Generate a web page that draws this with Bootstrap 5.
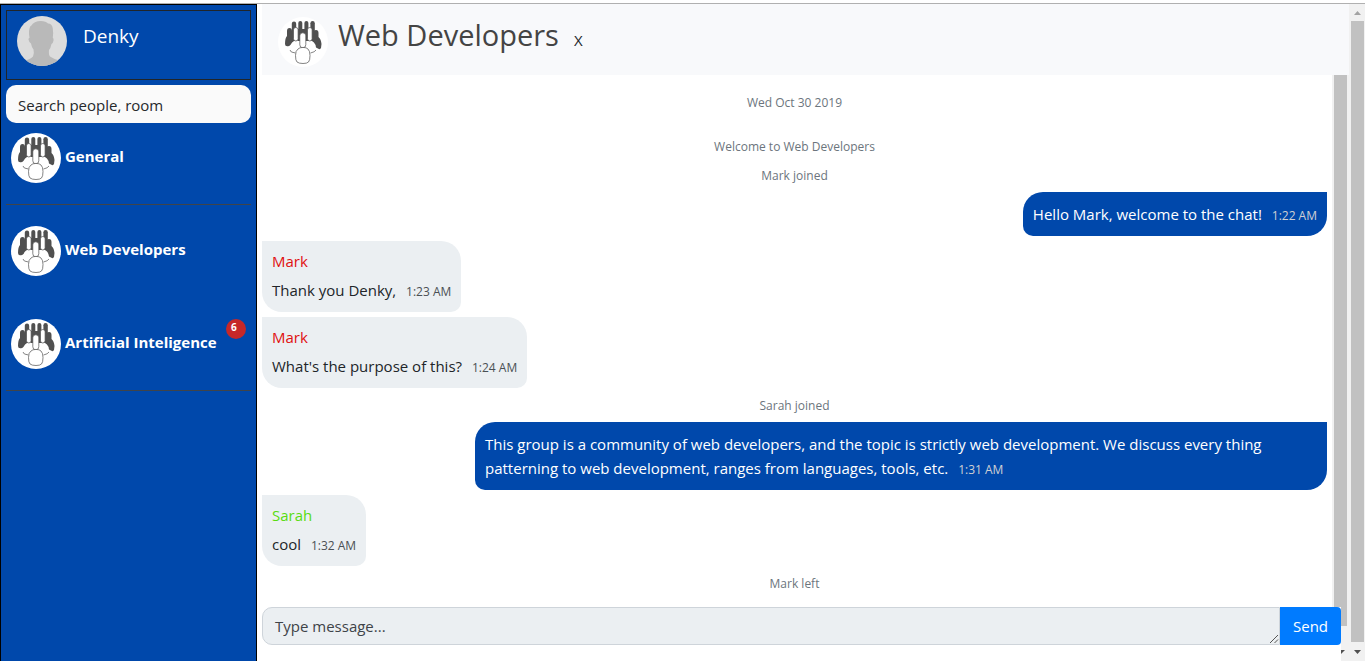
<!DOCTYPE html>
<html lang="en">
<head>
<meta charset="utf-8">
<meta name="viewport" content="width=device-width, initial-scale=1">
<title>Web Developers chat</title>
<link href="https://cdn.jsdelivr.net/npm/bootstrap@5.3.0/dist/css/bootstrap.min.css" rel="stylesheet">
<style>
  body { font-family: "Open Sans", "Noto Sans", sans-serif; font-size: 15px; line-height: 24px; color: #212529; }
  .top-rule { height: 4px; border-bottom: 1px solid #b0b0b0; }
  .sidebar { width: 257px; background: #0048ab; border: 1px solid #000; border-bottom: 0; padding: 5px; }
  .profile { height: 70px; border: 1px solid #212529; padding: 5px 10px; gap: 16px; margin-bottom: 5px; }
  .profile h1 { font-size: 19px; line-height: 24px; font-weight: 400; margin-top: 8px; color: #fff; }
  .search-box { height: 38px; border: 0; border-radius: 10px; background: #fafafa; padding: 8px 12px 6px; font-size: 15px; color: #333; }
  .search-box::placeholder { color: #26292c; opacity: 1; }
  .message-box::placeholder { color: #3e4348; opacity: 1; }
  .room-link { height: 93px; padding: 10px 5px 0; gap: 4px; color: #fff; text-decoration: none; font-weight: 700; position: relative; }
  .room-link.ruled::after { content: ""; position: absolute; left: 0; right: 0; bottom: 11px; height: 1px; background: #404448; }
  .room-name { margin-top: 11px; }
  .unread { position: absolute; top: 10px; right: 5px; width: 20px; height: 20px; border-radius: 50%; background: #c62828; font-size: 10px; line-height: 16px; padding-left: 5px; }
  .avatar { width: 50px; height: 50px; flex: none; }
  .main-pane { padding-left: 5px; }
  .room-header { height: 71px; background: #f8f9fb; padding: 13px 16px 0; gap: 10px; }
  .room-header h2 { font-size: 29px; line-height: 36px; font-weight: 400; color: #444; margin: 0 5px 0 0; }
  .leave { border: 0; background: none; padding: 0; margin-top: 11px; line-height: 24px; color: #212529; }
  .chat-log { padding: 15px 5px 0 0; gap: 5px; }
  .notice { color: #6c757d; font-size: 12px; line-height: 22px; padding-top: 2px; text-align: center; }
  .notice.date { margin-bottom: 15px; }
  .bubble { max-width: 80%; padding: 10px; }
  .bubble small { font-size: 12px; line-height: 12px; margin-left: 6px; }
  .mine { background: #0048ab; color: #fff; border-radius: 20px 0 20px 10px; }
  .mine small { color: #cfd0d3; }
  .theirs { background: #ebeff2; border-radius: 0 20px 10px 20px; padding-top: 8px; }
  .theirs small { color: #4a4f54; }
  .sender { font-weight: 500; margin-bottom: 5px; }
  .sender-red { color: #e01010; }
  .sender-green { color: #58dc10; }
  .composer { position: absolute; left: 0; right: 8px; bottom: 0; padding-bottom: 16px; background: #fff; }
  .message-box { height: 38px; background: #ebeff2; border: 1px solid #ced4da; border-radius: 10px 0 0 10px; font-size: 15px; line-height: 24px; padding: 6px 12px; color: #3e4348; overflow: hidden; resize: none; }
  .grip { position: absolute; right: 62px; bottom: 17px; width: 10px; height: 10px; }
  .send { width: 61px; height: 38px; border: 0; border-radius: 0 4px 4px 0; background: #007bff; color: #fff; padding: 0; font-size: 15px; }
  .scroll-track { flex: none; width: 17px; background: #f1f1f1; padding: 0 2px; }
  .scroll-track.page-track { width: 16px; padding-right: 1px; }
  .scroll-track svg { display: block; flex: none; width: 13px; height: 17px; }
  .page-track svg:last-child { height: 19px; }
  .scroll-thumb { background: #c1c1c1; }
  .track-end { height: 35px; padding-top: 18px; }
</style>
</head>
<body>
<svg class="d-none" aria-hidden="true">
  <symbol id="crowd" viewBox="0 0 50 50">
    <circle cx="25" cy="25" r="25" fill="#fff"/>
    <g fill="#505050">
      <rect x="13.8" y="4.6" width="4.4" height="12" rx="2.2"/><rect x="20.3" y="4" width="4" height="13" rx="2"/>
      <rect x="26.4" y="4" width="4" height="13" rx="2"/><rect x="32.4" y="4" width="4.4" height="13" rx="2.2"/>
      <path d="M13 17q0-4 3-4h3v11h-6zM20 12h10l1 5v10H19.500V16zM31 13h4q3 1 2.500 4v8h-6z"/>
      <path d="M9 14q0-3 2.500-3t2.500 3v4l4 3v4l-7 4q-4 1-4-2 0-6 2-8z"/>
      <path d="M35.500 16q0-3 2.500-3t2.500 3v4q2.500 2 3 7l-.5 4q-1 2-3 .5l-6-3-1-8 2.500-1z"/>
    </g>
    <g fill="#fff" stroke="#505050" stroke-width=".7">
      <path stroke="none" d="M12 34q-.5-8 4-10h7l2 9-6 4zM38 34q.5-8-4-10h-7l-2 9 6 4z"/>
      <path fill="none" d="M12 33q0 2.500 5.500 3M38 33q-1 2-5.500 3"/>
      <rect x="15.500" y="10.500" width="4.600" height="13.500" rx="2.300"/><rect x="29.500" y="10.500" width="4.600" height="13.500" rx="2.300"/>
      <rect x="21.800" y="15.800" width="6" height="15" rx="3"/>
      <path d="M20 32q1.500-1.600 5-1.600t5 1.600q2 2 2 6.500 0 5-1.500 6.500-1.500 1.500-5.500 1.500T19 45q-1.500-1.500-1.500-6.500T20 32z"/>
    </g>
  </symbol>
  <symbol id="grip-lines" viewBox="0 0 10 10"><path d="M1 9 9 1M5.500 9 9 5.500" stroke="#555" fill="none"/></symbol>
</svg>
<div class="vh-100 d-flex flex-column overflow-hidden">
  <div class="top-rule"></div>
  <div class="d-flex flex-grow-1">
    <aside class="sidebar flex-shrink-0">
      <div class="profile d-flex">
        <svg class="avatar" viewBox="0 0 50 50" role="img" aria-label="Denky">
          <clipPath id="round"><circle cx="25" cy="25" r="25"/></clipPath>
          <g clip-path="url(#round)"><path fill="#dcdcdc" d="M0 0h50v50H0z"/>
          <path fill="#b9b9b9" d="M14 10q3-5 10-5 5 0 7 2.500 4 0 4.800 5 .7 4 0 9.500 1.200 0 .7 2.500-.5 3-2 3.500-.8 4-2.500 6-.5 5 1 6.500Q38 44 44 45v5H6v-5q7-1.500 10-4.500 1.500-3 .5-7-1.800-2-2.500-6-1.800-.5-2.500-4 0-2 1-1.500-1.500-8 1-12z"/></g>
        </svg>
        <h1>Denky</h1>
      </div>
      <input class="search-box form-control" type="search" placeholder="Search people, room" aria-label="Search people, room">
      <nav>
        <a class="room-link ruled d-flex" href="#"><svg class="avatar"><use href="#crowd"/></svg><span class="room-name">General</span></a>
        <a class="room-link d-flex" href="#"><svg class="avatar"><use href="#crowd"/></svg><span class="room-name">Web Developers</span></a>
        <a class="room-link ruled d-flex" href="#"><svg class="avatar"><use href="#crowd"/></svg><span class="room-name">Artificial Inteligence</span><span class="unread">6</span></a>
      </nav>
    </aside>
    <main class="main-pane flex-grow-1 d-flex flex-column">
      <header class="room-header d-flex">
        <svg class="avatar"><use href="#crowd"/></svg>
        <h2>Web Developers</h2>
        <button class="leave align-self-start" type="button" aria-label="Leave room">X</button>
      </header>
      <div class="d-flex flex-grow-1 position-relative">
        <section class="chat-log flex-grow-1 d-flex flex-column">
          <div class="notice date">Wed Oct 30 2019</div>
          <div class="notice">Welcome to Web Developers</div>
          <div class="notice">Mark joined</div>
          <div class="bubble mine align-self-end">Hello Mark, welcome to the chat! <small>1:22 AM</small></div>
          <div class="bubble theirs align-self-start"><div class="sender sender-red">Mark</div>Thank you Denky, <small>1:23 AM</small></div>
          <div class="bubble theirs align-self-start"><div class="sender sender-red">Mark</div>What's the purpose of this? <small>1:24 AM</small></div>
          <div class="notice">Sarah joined</div>
          <div class="bubble mine align-self-end">This group is a community of web developers, and the topic is strictly web development. We discuss every thing patterning to web development, ranges from languages, tools, etc. <small>1:31 AM</small></div>
          <div class="bubble theirs align-self-start"><div class="sender sender-green">Sarah</div>cool <small>1:32 AM</small></div>
          <div class="notice">Mark left</div>
        </section>
        <div class="scroll-track d-flex flex-column" aria-hidden="true">
          <div class="scroll-thumb flex-grow-1"></div>
          <div class="track-end"><svg viewBox="0 0 13 17"><path fill="#505050" d="M2 6h9L6.500 10.500z"/></svg></div>
        </div>
        <form class="composer d-flex">
          <textarea class="message-box form-control" rows="1" placeholder="Type message..." aria-label="Type message"></textarea>
          <svg class="grip"><use href="#grip-lines"/></svg>
          <button class="send flex-shrink-0" type="button">Send</button>
        </form>
      </div>
    </main>
    <div class="scroll-track page-track d-flex flex-column" aria-hidden="true">
      <svg viewBox="0 0 13 17"><path fill="#a3a3a3" d="M3 11h7L6.500 7z"/></svg>
      <div class="scroll-thumb flex-grow-1"></div>
      <svg viewBox="0 0 13 19"><path fill="#505050" d="M3 8h7L6.500 12z"/></svg>
    </div>
  </div>
</div>
<script src="https://cdn.jsdelivr.net/npm/bootstrap@5.3.0/dist/js/bootstrap.bundle.min.js"></script>
</body>
</html>
